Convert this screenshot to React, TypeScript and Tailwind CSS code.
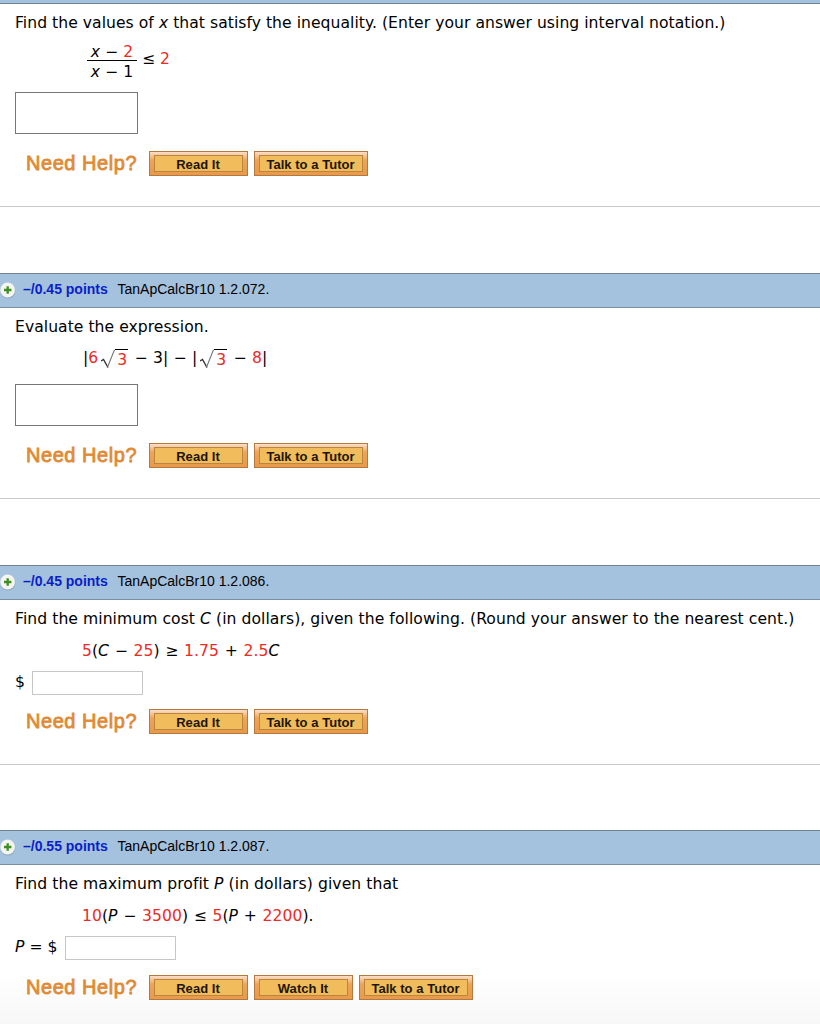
import type { ReactNode } from "react";

const Red = ({ children }: { children: ReactNode }) => <span className="text-[#ee2a24]">{children}</span>;

function TopicBar({ points, code }: { points: string; code: string }) {
  return (
    <header className="flex h-[35px] items-center border-y-[1.5px] border-t-[#71828f] border-b-[#7a8fa3] bg-[#a4c1dd] pb-px font-['Liberation_Sans',sans-serif] text-[14px] tracking-normal">
      <svg className="-ml-px h-[18px] w-[17px] shrink-0" viewBox="0 0 17 18">
        <circle cx="8.8" cy="9.8" r="7.6" fill="#7f95aa" opacity="0.6" />
        <circle cx="8.6" cy="9" r="7.4" fill="#f4f4f2" />
        <path d="M8.7 5.3v7.4M5 9h7.4" stroke="#3d8f22" strokeWidth="2.3" />
      </svg>
      <span className="ml-[7px] w-[94.5px] whitespace-nowrap pb-px font-bold text-[#0a1fc8]">{points}</span>
      <span className="whitespace-nowrap pb-px text-black">{code}</span>
    </header>
  );
}

function HelpButton({ label, wide }: { label: string; wide?: boolean }) {
  return (
    <button
      className={`${wide ? "w-[114px]" : "w-[99px]"} flex h-[25px] border border-[#b5793e] bg-linear-to-b from-[#f9dfc8] via-[#eda557] via-35% to-[#e9994a] px-1 py-[3px]`}
    >
      <span className="flex h-[17px] w-full items-center justify-center whitespace-nowrap border border-[#b9853f] bg-[#f1bc5c] pt-[2px] pr-px font-['Liberation_Sans',sans-serif] text-[13px] font-bold text-[#1d1505]">
        {label}
      </span>
    </button>
  );
}

function Help({ watch }: { watch?: boolean }) {
  return (
    <div className="flex h-[25px] items-center pl-[26px]">
      <span className="mb-px w-[123px] whitespace-nowrap font-['Liberation_Sans',sans-serif] text-[20px] leading-none tracking-[0.55px] text-[#e08a35] [-webkit-text-stroke:0.8px_#e08a35]">
        Need Help?
      </span>
      <div className="flex gap-[6px]">
        <HelpButton label="Read It" />
        {watch && <HelpButton label="Watch It" />}
        <HelpButton label="Talk to a Tutor" wide />
      </div>
    </div>
  );
}

function Prompt({ children }: { children: ReactNode }) {
  return <p className="h-[38px] whitespace-nowrap pl-[15px] leading-[38px]">{children}</p>;
}

function Root() {
  return (
    <span className="mr-px ml-[3px] flex h-[20px] items-end">
      <svg className="h-[20px] w-[14px]" viewBox="0 0 14 20">
        <path d="M0 12l2.5-1.5L7 18.5" fill="none" stroke="#333" strokeWidth="1.4" />
        <path d="M6.2 19L13.5 .7" fill="none" stroke="#777" strokeWidth="1.1" />
      </svg>
      <span className="h-[20px] w-[13px] border-t border-black pl-[2px] leading-[20px]">
        <Red>3</Red>
      </span>
    </span>
  );
}

export default function App() {
  return (
    <main className="h-[1024px] w-[820px] overflow-hidden bg-linear-to-b from-white from-95% to-[#f7f7f7] font-['DejaVu_Sans',Verdana,sans-serif] text-[15.6px] tracking-[0.04px] text-black">
      <div className="h-1 border-b border-[#6f8596] bg-[#a4c1dd]" />
      <section className="h-[269px]">
        <div className="h-[203px] border-b border-[#c9c9c9]">
          <Prompt>
            Find the values of <i>x</i> that satisfy the inequality. (Enter your answer using interval notation.)
          </Prompt>
          <div className="flex h-[38px] items-center pl-[87px]">
            <div className="mb-px w-[50px] text-center">
              <div className="h-[19px] border-b border-black leading-[20px]">
                <i>x</i> − <Red>2</Red>
              </div>
              <div className="h-[19px] leading-[22px]">
                <i>x</i> − 1
              </div>
            </div>
            <span className="mb-[3px] ml-[5px]">
              ≤ <Red>2</Red>
            </span>
          </div>
          <div className="mt-[12px] ml-[15px] h-[42px] w-[123px] border border-[#777] bg-white" />
          <div className="mt-[17px]">
            <Help />
          </div>
        </div>
      </section>

      <TopicBar points="–/0.45 points" code="TanApCalcBr10 1.2.072." />
      <section className="h-[257px]">
        <div className="h-[191px] border-b border-[#c9c9c9]">
          <Prompt>Evaluate the expression.</Prompt>
          <div className="flex h-[26px] items-center whitespace-pre pl-[83px] [word-spacing:0.3px]">
            <span>|</span>
            <Red>6</Red>
            <Root />
            <span> − 3| − |</span>
            <Root />
            <span>
              {" − "}
              <Red>8</Red>|
            </span>
          </div>
          <div className="mt-[12px] ml-[15px] h-[42px] w-[123px] border border-[#777] bg-white" />
          <div className="mt-[17px]">
            <Help />
          </div>
        </div>
      </section>

      <TopicBar points="–/0.45 points" code="TanApCalcBr10 1.2.086." />
      <section className="h-[230px]">
        <div className="h-[165px] border-b border-[#c9c9c9]">
          <Prompt>
            <span className="tracking-[0.06px]">
              Find the minimum cost <i>C</i> (in dollars), given the following. (Round your answer to the nearest cent.)
            </span>
          </Prompt>
          <p className="h-[26px] pl-[82px] leading-[26px] [word-spacing:0.7px]">
            <Red>5</Red>(<i>C</i> − <Red>25</Red>) ≥ <Red>1.75</Red> + <Red>2.5</Red>
            <i>C</i>
          </p>
          <div className="mt-[7px] flex h-[24px] items-center pl-[15px]">
            <span className="w-[17px]">$</span>
            <div className="h-[24px] w-[111px] border border-[#c6c6c6] bg-white" />
          </div>
          <div className="mt-[14px]">
            <Help />
          </div>
        </div>
      </section>

      <TopicBar points="–/0.55 points" code="TanApCalcBr10 1.2.087." />
      <section>
        <Prompt>
          <span className="tracking-[0.07px]">
            Find the maximum profit <i>P</i> (in dollars) given that
          </span>
        </Prompt>
        <p className="h-[26px] pl-[82px] leading-[26px] [word-spacing:0.7px]">
          <Red>10</Red>(<i>P</i> − <Red>3500</Red>) ≤ <Red>5</Red>(<i>P</i> + <Red>2200</Red>).
        </p>
        <div className="mt-[7px] flex h-[24px] items-center pl-[15px]">
          <span className="w-[50px] whitespace-nowrap">
            <i>P</i> = $
          </span>
          <div className="h-[24px] w-[111px] border border-[#c6c6c6] bg-white" />
        </div>
        <div className="mt-[15px]">
          <Help watch />
        </div>
      </section>
    </main>
  );
}
